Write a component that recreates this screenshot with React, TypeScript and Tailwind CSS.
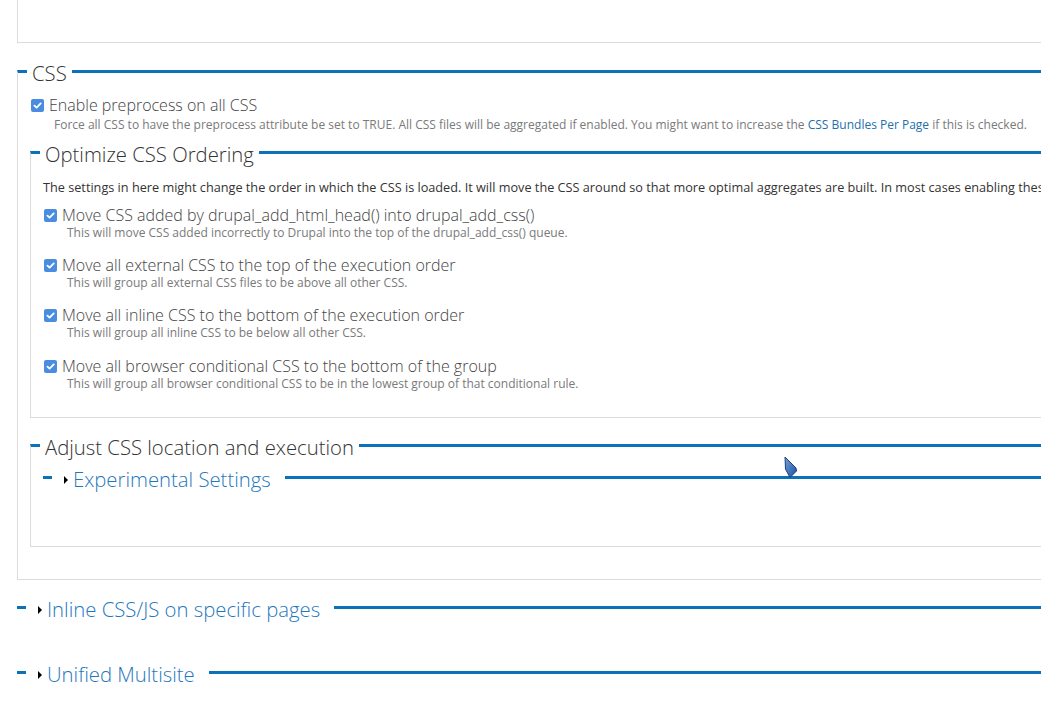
import React from "react";

const Check = () => (
  <span className="inline-flex w-[13px] h-[13px] rounded-[2px] bg-[#4a8de0] items-center justify-center shrink-0">
    <svg width="9" height="9" viewBox="0 0 10 10">
      <path d="M1.6 5.1 L4 7.4 L8.6 2.6" stroke="white" strokeWidth="2" fill="none" strokeLinecap="round" strokeLinejoin="round" />
    </svg>
  </span>
);

const Tri = () => (
  <span className="w-0 h-0 border-y-[4px] border-y-transparent border-l-[4px] border-l-black shrink-0" />
);

const Item = ({
  label,
  children,
  className = "",
  descClass = "",
}: {
  label: string;
  children: React.ReactNode;
  className?: string;
  descClass?: string;
}) => (
  <div className={className}>
    <div className="flex items-center h-[20px]">
      <span className="ml-[4px] flex"><Check /></span>
      <span className="ml-[5px] text-[16px] leading-[20px] font-light text-[#444] whitespace-nowrap">{label}</span>
    </div>
    <div className={`ml-[27px] text-[12px] leading-[16px] text-[#7a7a7a] whitespace-nowrap ${descClass}`}>{children}</div>
  </div>
);

const Legend = ({ children }: { children: React.ReactNode }) => (
  <legend className="px-[5px] pt-[4px] text-[20.3px] leading-[27px] font-light text-[#333] whitespace-nowrap">{children}</legend>
);

const CollapsedLegend = ({ children }: { children: React.ReactNode }) => (
  <legend className="pl-[12px] pr-[14px] pt-[4px] whitespace-nowrap">
    <span className="flex items-center h-[27px]">
      <Tri />
      <span className="ml-[5px] text-[20.3px] leading-[27px] font-light text-[#1f78bd]">{children}</span>
    </span>
  </legend>
);

const openCls = "border-t-[3px] border-t-[#0b72b9] border-l border-b border-l-[#dcdcdc] border-b-[#dcdcdc] pl-[9px]";
const closedCls = "border-t-[3px] border-t-[#0b72b9] pl-[9px]";

export default function App() {
  return (
    <div className="relative w-[1041px] h-[719px] overflow-hidden bg-white font-['Open_Sans',sans-serif]">
      <div className="w-[1120px] pl-[17px]">
        <div className="h-[43px] border-l border-b border-[#dcdcdc]" />

        <fieldset className={`mt-[13px] pb-[32px] ${openCls}`}>
          <Legend>CSS</Legend>
          <Item className="mt-[8px]" descClass="mt-[2px]" label="Enable preprocess on all CSS">
            Force all CSS to have the preprocess attribute be set to TRUE. All CSS files will be aggregated if enabled. You might want to increase the{" "}
            <a className="text-[#1d6fad]">CSS Bundles Per Page</a> if this is checked.
          </Item>

          <fieldset className={`mt-[4px] ml-[3px] pb-[25px] ${openCls}`}>
            <Legend>Optimize CSS Ordering</Legend>
            <div className="mt-[10px] ml-[3px] text-[12.7px] leading-[18px] text-[#333] whitespace-nowrap">
              The settings in here might change the order in which the CSS is loaded. It will move the CSS around so that more optimal aggregates are built. In most cases enabling these settings should be safe.
            </div>
            <Item className="mt-[9px]" label="Move CSS added by drupal_add_html_head() into drupal_add_css()">
              This will move CSS added incorrectly to Drupal into the top of the drupal_add_css() queue.
            </Item>
            <Item className="mt-[14px]" label="Move all external CSS to the top of the execution order">
              This will group all external CSS files to be above all other CSS.
            </Item>
            <Item className="mt-[14px]" label="Move all inline CSS to the bottom of the execution order">
              This will group all inline CSS to be below all other CSS.
            </Item>
            <Item className="mt-[15px]" label="Move all browser conditional CSS to the bottom of the group">
              This will group all browser conditional CSS to be in the lowest group of that conditional rule.
            </Item>
          </fieldset>

          <fieldset className={`mt-[12px] ml-[3px] pb-[53px] ${openCls}`}>
            <Legend>Adjust CSS location and execution</Legend>
            <fieldset className={`mt-[1px] ml-[3px] ${closedCls}`}>
              <CollapsedLegend>Experimental Settings</CollapsedLegend>
            </fieldset>
          </fieldset>
        </fieldset>

        <fieldset className={`mt-[12px] ${closedCls}`}>
          <CollapsedLegend>Inline CSS/JS on specific pages</CollapsedLegend>
        </fieldset>

        <fieldset className={`mt-[34px] ${closedCls}`}>
          <CollapsedLegend>Unified Multisite</CollapsedLegend>
        </fieldset>
      </div>

      <svg className="absolute left-[782px] top-[455px]" width="18" height="26" viewBox="0 0 18 26">
        <defs>
          <linearGradient id="cur" x1="0" y1="0" x2="1" y2="1">
            <stop offset="0" stopColor="#6fa0e0" />
            <stop offset="1" stopColor="#1f4f9e" />
          </linearGradient>
        </defs>
        <path d="M3 2 L3.5 14 L8 22.5 L14.5 16 L14 13 Z" fill="url(#cur)" stroke="#1b3f7a" strokeWidth="1" strokeLinejoin="round" />
      </svg>
    </div>
  );
}
